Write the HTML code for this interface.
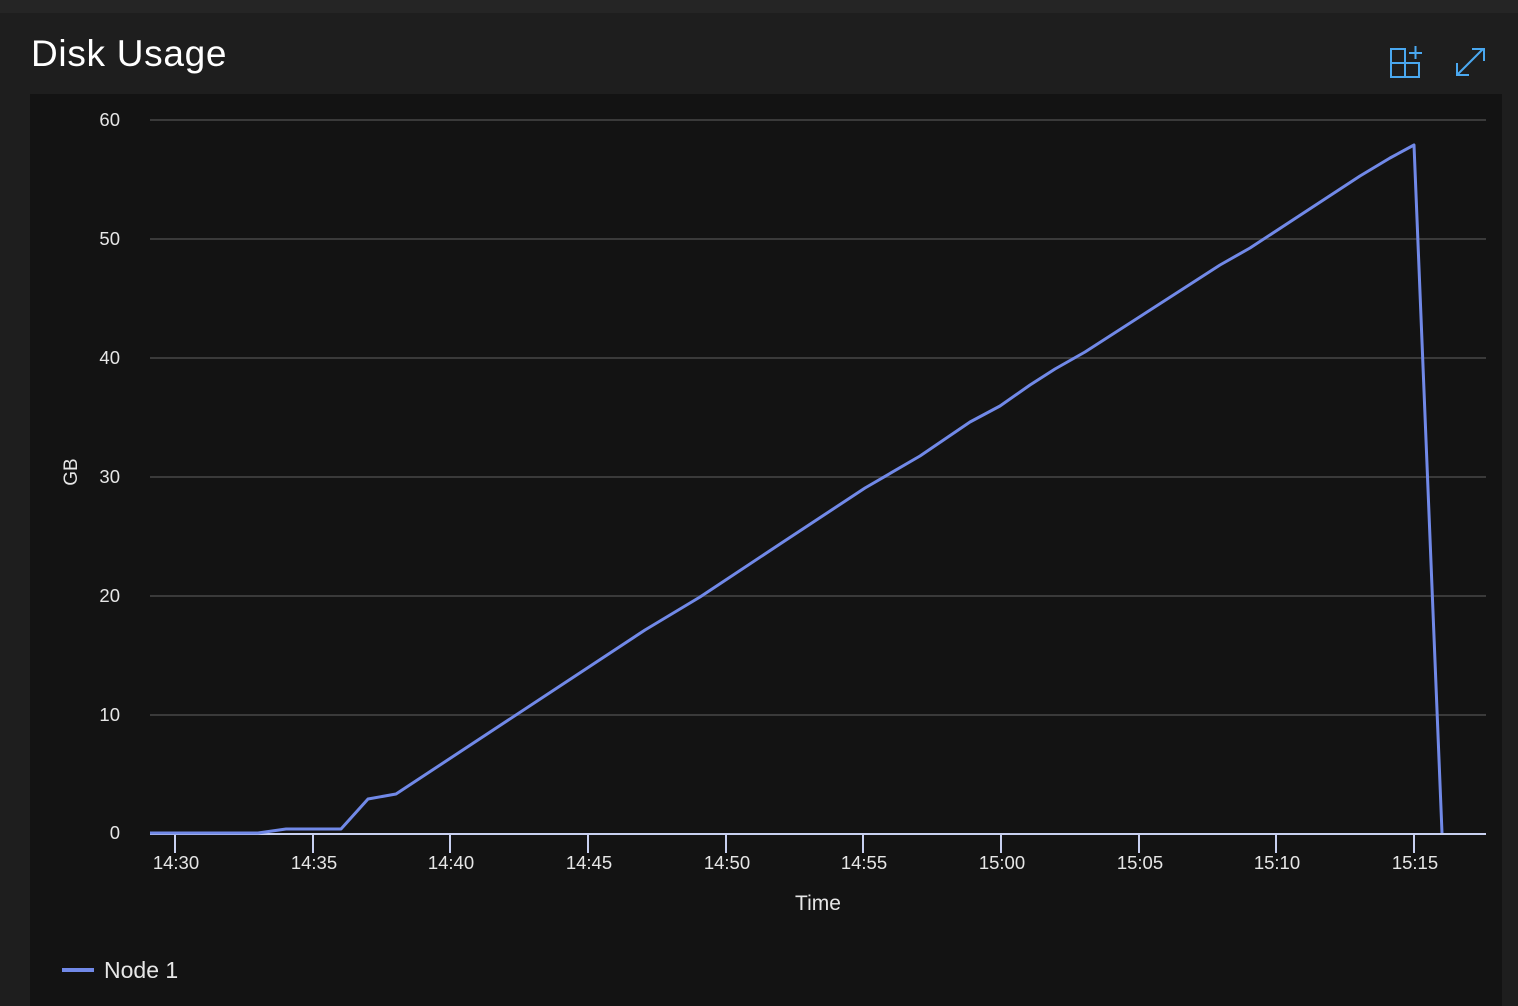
<!DOCTYPE html>
<html><head><meta charset="utf-8"><style>
html,body{margin:0;padding:0;background:#1e1e1e;width:1518px;height:1006px;overflow:hidden;font-family:"Liberation Sans",sans-serif;}
.top{position:absolute;left:0;top:0;width:1518px;height:13px;background:#252525;}
</style></head><body>
<div class="top"></div>
<svg width="1518" height="1006" style="position:absolute;left:0;top:0">
<text x="31" y="66" fill="#ffffff" font-size="37" letter-spacing="0.7" font-family="Liberation Sans, sans-serif">Disk Usage</text>
<g stroke="#4aa8f0" stroke-width="2" fill="none">
<rect x="1391" y="49" width="14" height="28"/>
<rect x="1391" y="63" width="28" height="14"/>
<line x1="1409" y1="53" x2="1422" y2="53"/>
<line x1="1415.5" y1="46" x2="1415.5" y2="59"/>
<line x1="1458" y1="74" x2="1483" y2="49"/>
<polyline points="1472,49 1484,49 1484,61"/>
<polyline points="1457,63 1457,75 1469,75"/>
</g>
<rect x="30" y="94" width="1472" height="912" fill="#131313"/>
<g stroke="#3a3a3a" stroke-width="2">
<line x1="150" y1="120" x2="1486" y2="120"/>
<line x1="150" y1="239" x2="1486" y2="239"/>
<line x1="150" y1="358" x2="1486" y2="358"/>
<line x1="150" y1="477" x2="1486" y2="477"/>
<line x1="150" y1="596" x2="1486" y2="596"/>
<line x1="150" y1="715" x2="1486" y2="715"/>
</g>
<g fill="#e6e6e6" font-size="18.5" text-anchor="end">
<text x="120" y="126">60</text><text x="120" y="245">50</text><text x="120" y="364">40</text>
<text x="120" y="483">30</text><text x="120" y="602">20</text><text x="120" y="721">10</text><text x="120" y="839">0</text>
</g>
<text transform="translate(77,472) rotate(-90)" fill="#e6e6e6" font-size="19" text-anchor="middle">GB</text>
<line x1="150" y1="834" x2="1486" y2="834" stroke="#c8d0f0" stroke-width="2"/>
<g stroke="#c8d0f0" stroke-width="2">
<line x1="175" y1="834" x2="175" y2="853"/><line x1="313" y1="834" x2="313" y2="853"/>
<line x1="450" y1="834" x2="450" y2="853"/><line x1="588" y1="834" x2="588" y2="853"/>
<line x1="726" y1="834" x2="726" y2="853"/><line x1="863" y1="834" x2="863" y2="853"/>
<line x1="1001" y1="834" x2="1001" y2="853"/><line x1="1139" y1="834" x2="1139" y2="853"/>
<line x1="1276" y1="834" x2="1276" y2="853"/><line x1="1414" y1="834" x2="1414" y2="853"/>
</g>
<g fill="#e6e6e6" font-size="18.5" text-anchor="middle">
<text x="176" y="869">14:30</text><text x="314" y="869">14:35</text><text x="451" y="869">14:40</text>
<text x="589" y="869">14:45</text><text x="727" y="869">14:50</text><text x="864" y="869">14:55</text>
<text x="1002" y="869">15:00</text><text x="1140" y="869">15:05</text><text x="1277" y="869">15:10</text>
<text x="1415" y="869">15:15</text>
</g>
<text x="818" y="910" fill="#e6e6e6" font-size="21" text-anchor="middle">Time</text>
<polyline fill="none" stroke="#7189e8" stroke-width="3" stroke-linejoin="round" points="150,833 258,833 286,829 341,829 368,799 396,794 560,686 645,630 670,615 700,597 780,544 865,488 920,456 970,422 1000,406 1030,385 1055,369 1085,352 1220,265 1250,248 1360,176 1390,158 1414,145 1442,833"/>
<line x1="62" y1="970" x2="94" y2="970" stroke="#7189e8" stroke-width="4"/>
<text x="104" y="978" fill="#e6e6e6" font-size="23">Node 1</text>
</svg>
</body></html>
